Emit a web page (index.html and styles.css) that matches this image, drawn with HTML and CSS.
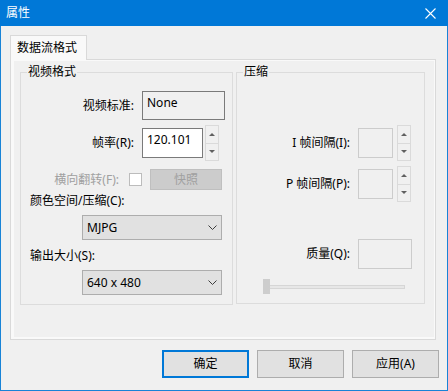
FILE: index.html
```html
<!DOCTYPE html>
<html lang="zh-CN">
<head>
<meta charset="utf-8">
<title>属性</title>
<link rel="stylesheet" href="styles.css">
</head>
<body>
<div class="window">
  <div class="titlebar">
    <span class="title">属性</span>
    <svg class="close" width="11" height="11" viewBox="0 0 11 11"><path d="M0.5 0.5 L10.5 10.5 M10.5 0.5 L0.5 10.5" stroke="#fff" stroke-width="1.1" fill="none"/></svg>
  </div>
  <div class="body">
    <div class="tabs"><div class="tab">数据流格式</div></div>
    <div class="tabpanel">
      <div class="page">
        <fieldset class="group video">
          <legend>视频格式</legend>
          <div class="row r1">
            <span class="lbl w113">视频标准:</span>
            <div class="edit readonly wide">None</div>
          </div>
          <div class="row r2">
            <span class="lbl w113">帧率(R):</span>
            <div class="edit num">120.101</div>
            <div class="spin"><div class="sb"><i class="up"></i></div><div class="sb"><i class="dn"></i></div></div>
          </div>
          <div class="row r3">
            <span class="lbl w98 dis">横向翻转(F):</span>
            <span class="check"></span>
            <div class="btn snap">快照</div>
          </div>
          <div class="cap c1">颜色空间/压缩(C):</div>
          <div class="combo">MJPG<svg class="chev" width="9" height="5" viewBox="0 0 9 5"><polyline points="0.5,0.5 4.5,4.5 8.5,0.5" fill="none" stroke="#3c3c3c" stroke-width="1"/></svg></div>
          <div class="cap c2">输出大小(S):</div>
          <div class="combo">640 x 480<svg class="chev" width="9" height="5" viewBox="0 0 9 5"><polyline points="0.5,0.5 4.5,4.5 8.5,0.5" fill="none" stroke="#3c3c3c" stroke-width="1"/></svg></div>
        </fieldset>
        <fieldset class="group compress">
          <legend>压缩</legend>
          <div class="row ri">
            <span class="lbl w113">I 帧间隔(I):</span>
            <div class="edit dbox small"></div>
            <div class="spin sp2"><div class="sb"><i class="up"></i></div><div class="sb"><i class="dn"></i></div></div>
          </div>
          <div class="row rp">
            <span class="lbl w113">P 帧间隔(P):</span>
            <div class="edit dbox small"></div>
            <div class="spin sp2"><div class="sb"><i class="up"></i></div><div class="sb"><i class="dn"></i></div></div>
          </div>
          <div class="row rq">
            <span class="lbl w113">质量(Q):</span>
            <div class="edit dbox quality"></div>
          </div>
          <div class="slider"><div class="track"></div><div class="thumb"></div></div>
        </fieldset>
      </div>
    </div>
    <div class="buttons">
      <div class="btn push default">确定</div>
      <div class="btn push">取消</div>
      <div class="btn push">应用(A)</div>
    </div>
  </div>
</div>
</body>
</html>
```
FILE: styles.css
```css
* { box-sizing: border-box; }
html, body { margin: 0; padding: 0; }
body {
  width: 448px;
  height: 391px;
  overflow: hidden;
  font-family: "Noto Sans", "Noto Sans CJK SC", sans-serif;
  font-size: 12px;
  color: #000;
  background: #f0f0f0;
}
.window {
  width: 448px;
  height: 391px;
  background: #f0f0f0;
  border: 1px solid #1883d7;
  border-top: 0;
  display: flex;
  flex-direction: column;
}
.titlebar {
  height: 26px;
  margin: 0 -1px;
  background: #0078d7;
  display: flex;
  align-items: center;
  color: #fff;
}
.title {
  padding-left: 6px;
  line-height: 16px;
  font-size: 12px;
}
.close {
  margin-left: auto;
  margin-right: 12px;
  display: block;
}
.body {
  padding: 9px 0 0 9px;
  display: flex;
  flex-direction: column;
}
.tabs { display: flex; }
.tab {
  position: relative;
  z-index: 1;
  width: 77px;
  height: 25px;
  margin-bottom: -1px;
  border: 1px solid #d9d9d9;
  border-bottom: 0;
  background: #f9f9f9;
  display: flex;
  align-items: center;
  padding-left: 6px;
  line-height: 16px;
}
.tabpanel {
  width: 426px;
  height: 281px;
  border: 1px solid #d9d9d9;
  background: #f9f9f9;
  padding: 1px 1px 2px 3px;
}
.page {
  height: 100%;
  background: #f0f0f0;
  padding: 3px 0 0 6px;
  display: flex;
  gap: 3px;
  align-items: flex-start;
}
.group {
  margin: 0;
  border: 1px solid #dcdcdc;
  min-width: 0;
}
.group legend {
  padding: 0 1px;
  margin-left: 6px;
  line-height: 16px;
}
.video {
  width: 213px;
  padding: 11px 0 9px 0;
}
.compress {
  width: 189px;
  height: 240px;
  padding: 45px 0 0 0;
}
.row {
  display: flex;
  align-items: center;
}
.lbl {
  text-align: right;
  line-height: 16px;
  white-space: nowrap;
}
.w113 { width: 113px; margin-right: 8px; }
.w98 { width: 98px; margin-right: 10px; }
.dis { color: #a0a0a0; }
.r1 { height: 29px; }
.r2 { height: 36px; margin-top: 5px; }
.r3 { height: 21px; margin-top: 8px; }
.edit {
  height: 30px;
  border: 1px solid #7a7a7a;
  padding: 3px 4px;
  line-height: 16px;
  background: #fff;
}
.readonly { background: #f0f0f0; }
.wide { width: 83px; height: 29px; }
.num { width: 61px; }
.spin {
  width: 14px;
  height: 36px;
  margin-left: 2px;
  display: flex;
  flex-direction: column;
  border: 1px solid #dadada;
}
.sb {
  flex: 1;
  display: flex;
  align-items: center;
  justify-content: center;
}
.sb + .sb { border-top: 1px solid #dadada; }
.up, .dn {
  width: 0;
  height: 0;
  border-left: 3px solid transparent;
  border-right: 3px solid transparent;
}
.up { border-bottom: 3px solid #606060; }
.dn { border-top: 3px solid #606060; }
.check {
  width: 13px;
  height: 13px;
  border: 1px solid #bcbcbc;
  background: #fff;
}
.btn {
  display: flex;
  align-items: center;
  justify-content: center;
  line-height: 16px;
}
.snap {
  width: 72px;
  height: 21px;
  margin-left: 8px;
  background: #cccccc;
  border: 1px solid #bfbfbf;
  color: #a0a0a0;
}
.cap {
  padding-left: 9px;
  line-height: 16px;
}
.c1 { margin-top: 3px; }
.c2 { margin-top: 8px; }
.combo {
  margin: 6px 0 0 61px;
  width: 140px;
  height: 25px;
  border: 1px solid #adadad;
  background: #e1e1e1;
  display: flex;
  align-items: center;
  padding: 0 4px 0 4px;
  line-height: 16px;
}
.chev { margin-left: auto; display: block; }
.dbox {
  border-color: #cccccc;
  background: #f0f0f0;
}
.small { width: 35px; }
.sp2 { margin-left: 4px; }
.ri { height: 36px; }
.rp { height: 36px; margin-top: 5px; }
.rq { height: 30px; margin-top: 37px; }
.quality { width: 54px; }
.slider {
  position: relative;
  width: 142px;
  height: 15px;
  margin: 10px 0 0 26px;
  display: flex;
  align-items: center;
}
.track {
  width: 100%;
  height: 4px;
  border: 1px solid #d6d6d6;
  background: #e7e7e7;
}
.thumb {
  position: absolute;
  left: 0;
  top: 0;
  width: 7px;
  height: 15px;
  background: #cdcdcd;
}
.buttons {
  margin-top: 10px;
  padding-right: 8px;
  display: flex;
  justify-content: flex-end;
  gap: 8px;
}
.push {
  width: 87px;
  height: 28px;
  background: #e1e1e1;
  border: 1px solid #adadad;
}
.default { border: 2px solid #0078d7; }
```
